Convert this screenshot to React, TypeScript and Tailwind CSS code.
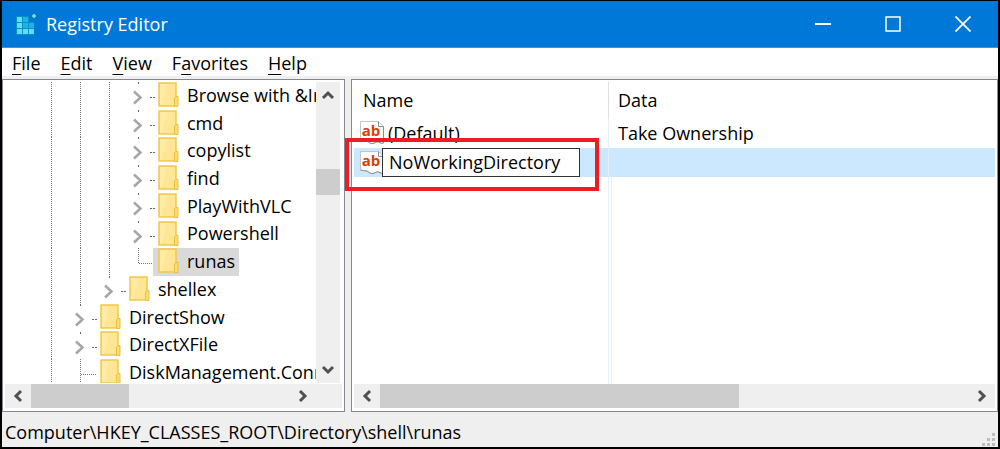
import { ReactNode } from "react";

type Branch = "line" | "expand" | "tee" | "end";

const menu = [
  { before: "", key: "F", after: "ile" },
  { before: "", key: "E", after: "dit" },
  { before: "", key: "V", after: "iew" },
  { before: "F", key: "a", after: "vorites" },
  { before: "", key: "H", after: "elp" },
];

const tree: { name: string; branches: Branch[]; selected?: boolean }[] = [
  { name: "Browse with &Ir", branches: ["line", "line", "line", "expand"] },
  { name: "cmd", branches: ["line", "line", "line", "expand"] },
  { name: "copylist", branches: ["line", "line", "line", "expand"] },
  { name: "find", branches: ["line", "line", "line", "expand"] },
  { name: "PlayWithVLC", branches: ["line", "line", "line", "expand"] },
  { name: "Powershell", branches: ["line", "line", "line", "expand"] },
  {
    name: "runas",
    branches: ["line", "line", "line", "end"],
    selected: true,
  },
  { name: "shellex", branches: ["line", "line", "expand"] },
  { name: "DirectShow", branches: ["line", "expand"] },
  { name: "DirectXFile", branches: ["line", "expand"] },
  { name: "DiskManagement.Conn", branches: ["line", "tee"] },
];

function RegistryIcon() {
  return (
    <svg width="24" height="24" viewBox="0 0 24 24">
      <rect x="2" y="4" width="18" height="19" fill="#0b8fc4" />
      <g fill="#5fdcff">
        <rect x="3" y="5" width="5" height="5" />
        <rect x="3" y="11" width="5" height="5" />
        <rect x="3" y="17" width="5" height="5" />
        <rect x="9" y="17" width="5" height="5" />
        <rect x="15" y="17" width="5" height="5" />
      </g>
      <g fill="#19b5ea">
        <rect x="9" y="5" width="5" height="5" />
        <rect x="9" y="11" width="5" height="5" />
        <rect x="15" y="11" width="5" height="5" />
      </g>
      <path d="M15 3H22V10H15Z" fill="#0078d7" />
      <path d="M20 0L24 4L20 8L16 4Z" fill="#0a6f9f" />
      <path d="M20 1.500L22.500 4L20 6.500L17.500 4Z" fill="#5fdcff" />
    </svg>
  );
}

function FolderIcon() {
  return (
    <svg width="21" height="26" viewBox="0 0 21 26" className="shrink-0">
      <rect
        x="1"
        y="1"
        width="17"
        height="23"
        fill="#fee695"
        stroke="#efc94c"
        strokeWidth="1.5"
      />
      <path d="M2 2H9L4 23H2Z" fill="#ffeba8" />
      <path
        d="M16.500 24.500V16L18 14.500H20V24.500Z"
        fill="#fbdc74"
        stroke="#eac03a"
      />
    </svg>
  );
}

function StringIcon() {
  return (
    <svg width="24" height="25" viewBox="0 0 24 25" className="shrink-0">
      <path
        d="M0.500 1.500H18.500L23.500 6.500V23C21 24.500 19 21 16.500 22C13 24 11 24 8.500 22C6 20 3 21 0.500 20Z"
        fill="#fff"
        stroke="#c4c4c4"
      />
      <path
        d="M18.500 1.500V6.500H23.500V23C21 24.500 19 21 16.500 22C13 24 11 24 8.500 22C6 20 3 21 0.500 20"
        fill="none"
        stroke="#8c8c8c"
      />
      <text
        x="11"
        y="16"
        textAnchor="middle"
        fontSize="15"
        fontWeight="700"
        fill="#d8400f"
        className="font-['Open_Sans',sans-serif]"
      >
        ab
      </text>
    </svg>
  );
}

// One indent level of the tree, 29px wide with its line in the middle
function BranchCell({ type }: { type: Branch }) {
  return (
    <svg className="h-full w-[29px] shrink-0 overflow-visible">
      <g stroke="#777" strokeDasharray="1 1">
        {(type === "line" || type === "tee") && (
          <line x1="14.5" y1="0" x2="14.5" y2="100%" />
        )}
        {type === "end" && <line x1="14.5" y1="0" x2="14.5" y2="16" />}
        {(type === "end" || type === "tee") && (
          <line x1="15" y1="15.5" x2="31" y2="15.5" />
        )}
      </g>
      {type === "expand" && (
        <>
          <rect x="14" y="0" width="1" height="2" fill="#666" />
          <path
            d="M10 9.500L16.500 15.500L10 21.500"
            fill="none"
            stroke="#a6a6a6"
            strokeWidth="2.5"
          />
          <path d="M26 15h2v1h-2zM29 15h2v1h-2z" fill="#666" />
        </>
      )}
    </svg>
  );
}

function ArrowButton({ label, d }: { label: string; d: string }) {
  return (
    <button
      aria-label={label}
      className="flex size-[26px] shrink-0 items-center justify-center"
    >
      <svg width="14" height="14" viewBox="0 0 14 14">
        <path d={d} fill="none" stroke="#505050" strokeWidth="3" />
      </svg>
    </button>
  );
}

function HorizontalScroll({ children }: { children: ReactNode }) {
  return (
    <div className="flex h-6 shrink-0 items-center bg-[#efefef]">
      <ArrowButton label="Scroll left" d="M10 2L5 7L10 12" />
      <div className="h-full min-w-0 flex-1">{children}</div>
      <ArrowButton label="Scroll right" d="M4 2L9 7L4 12" />
    </div>
  );
}

function TitleBar() {
  return (
    <header className="flex h-[47px] shrink-0 items-center border-b border-[#3a94e0] bg-[#0078d7] pl-3 text-white">
      <RegistryIcon />
      <h1 className="ml-2 flex-1 text-lg">Registry Editor</h1>
      <button
        aria-label="Minimize"
        className="flex h-full w-[70px] items-center justify-center"
      >
        <svg width="16" height="16" viewBox="0 0 16 16">
          <path d="M0 8H16" stroke="#fff" strokeWidth="2" />
        </svg>
      </button>
      <button
        aria-label="Maximize"
        className="flex h-full w-[70px] items-center justify-center"
      >
        <svg width="16" height="16" viewBox="0 0 16 16">
          <rect
            x="1"
            y="1"
            width="14"
            height="14"
            fill="none"
            stroke="#fff"
            strokeWidth="1.5"
          />
        </svg>
      </button>
      <button
        aria-label="Close"
        className="flex h-full w-[70px] items-center justify-center"
      >
        <svg width="16" height="16" viewBox="0 0 16 16">
          <path
            d="M0.500 0.500L15.500 15.500M15.500 0.500L0.500 15.500"
            stroke="#fff"
            strokeWidth="1.7"
          />
        </svg>
      </button>
    </header>
  );
}

function KeyTree() {
  return (
    <nav
      aria-label="Registry keys"
      className="flex w-[343px] shrink-0 flex-col border border-[#828790] bg-white p-0.5"
    >
      <div className="flex min-h-0 flex-1">
        <div className="min-w-0 flex-1 overflow-hidden">
          <ul className="grid h-[calc(100%+4px)] auto-rows-fr pl-8">
            {tree.map((item) => (
              <li key={item.name} className="flex min-h-0 items-center">
                {item.branches.map((type, i) => (
                  <BranchCell key={i} type={type} />
                ))}
                <button
                  className={`flex h-full items-center gap-2 pr-1 pb-0.5 pl-[5px] whitespace-nowrap ${
                    item.selected ? "bg-[#d9d9d9]" : ""
                  }`}
                >
                  <FolderIcon />
                  {item.name}
                </button>
              </li>
            ))}
          </ul>
        </div>
        <div className="mr-0.5 flex w-6 flex-col items-center bg-[#efefef]">
          <ArrowButton label="Scroll up" d="M2 10L7 5L12 10" />
          <div className="w-full flex-1 pt-[61px]">
            <div className="h-[26px] bg-[#cdcdcd]" />
          </div>
          <ArrowButton label="Scroll down" d="M2 4L7 9L12 4" />
        </div>
      </div>
      <div className="mt-px mb-px bg-[#efefef] pr-[26px]">
        <HorizontalScroll>
          <div className="h-full w-[98px] bg-[#cdcdcd]" />
        </HorizontalScroll>
      </div>
    </nav>
  );
}

function ValueList() {
  return (
    <main className="relative flex min-w-0 flex-1 flex-col border border-[#828790] bg-white p-0.5 pb-[3px]">
      <div className="flex min-h-0 flex-1 flex-col">
        <table className="w-full table-fixed border-separate border-spacing-0 text-left">
          <thead>
            <tr className="h-[37px]">
              <th className="w-[255px] border-r border-[#e0e0e0] pb-0.5 pl-[9px] font-normal">
                Name
              </th>
              <th className="pb-0.5 pl-[9px] font-normal">Data</th>
            </tr>
          </thead>
          <tbody>
            <tr className="h-[29px]">
              <td className="border-r border-[#e3f1fc] p-0 pl-1.5">
                <div className="flex h-7 items-center gap-1 pb-0.5">
                  <StringIcon />
                  (Default)
                </div>
              </td>
              <td className="p-0 pb-0.5 pl-[9px]">Take Ownership</td>
            </tr>
            <tr className="h-[29px] bg-[#cce8ff]">
              <td className="border-r border-[#e3f1fc] p-0 pl-1.5">
                <div className="flex items-center">
                  <StringIcon />
                  <input
                    aria-label="Value name"
                    defaultValue="NoWorkingDirectory"
                    className="-ml-0.5 h-[29px] w-[198px] border border-[#333] bg-white px-1.5 pb-0.5 outline-none"
                  />
                </div>
              </td>
              <td />
            </tr>
          </tbody>
        </table>
        <div className="flex flex-1">
          <div className="w-[255px] border-r border-[#e3f1fc]" />
          <div className="w-[3px] border-r border-[#e3f1fc]" />
        </div>
      </div>
      <HorizontalScroll>
        <div className="h-full w-[61%] bg-[#cdcdcd]" />
      </HorizontalScroll>
      {/* Callout around the value being renamed */}
      <div className="pointer-events-none absolute top-[58px] -left-[7px] h-[53px] w-[254px] border-4 border-[#ee1c25]" />
    </main>
  );
}

export default function App() {
  return (
    <div className="flex h-screen flex-col border-2 border-t border-black bg-[#efefef] font-['Open_Sans','Noto_Sans',sans-serif] text-lg leading-6 text-black">
      <TitleBar />
      <div className="flex h-7 shrink-0 items-center bg-white pt-0.5">
        {menu.map((item) => (
          <button
            key={item.key}
            className="px-2.5 underline-offset-4"
          >
            {item.before}
            <span className="underline decoration-1">{item.key}</span>
            {item.after}
          </button>
        ))}
      </div>
      <div className="mt-[3px] flex min-h-0 flex-1 gap-1.5">
        <KeyTree />
        <ValueList />
      </div>
      <footer className="flex h-[35px] shrink-0 items-center justify-between pl-[3px]">
        <span className="pt-1">
          Computer\HKEY_CLASSES_ROOT\Directory\shell\runas
        </span>
        <svg width="16" height="16" viewBox="0 0 16 16" className="self-end">
          <path
            d="M10 2h3v3h-3zM5 7h3v3h-3zM10 7h3v3h-3zM0 12h3v3h-3zM5 12h3v3h-3zM10 12h3v3h-3z"
            fill="#bdbdbd"
          />
        </svg>
      </footer>
    </div>
  );
}
